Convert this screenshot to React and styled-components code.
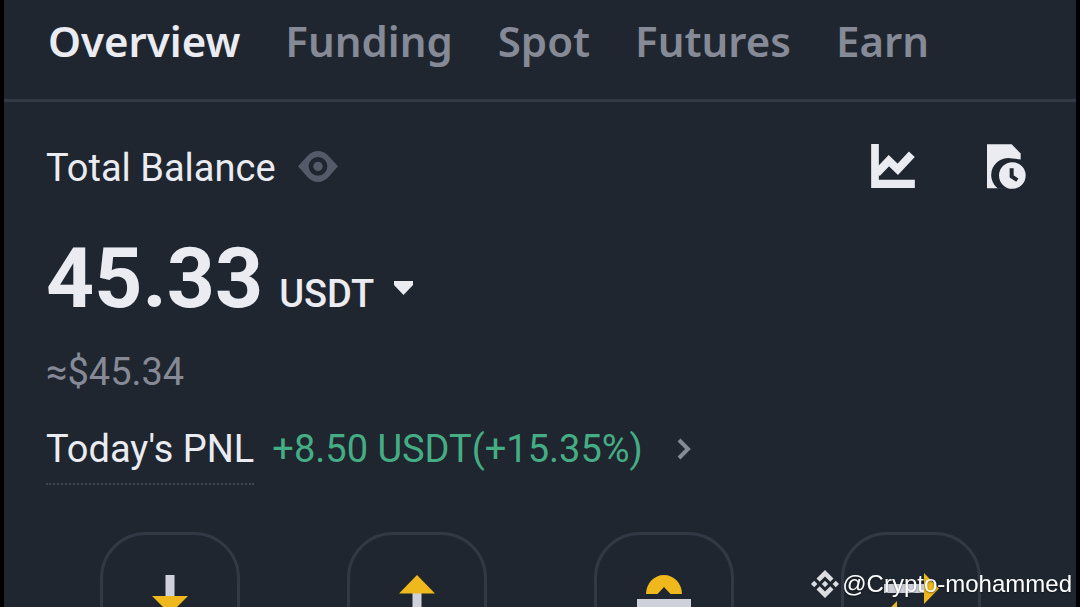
import React, { useState } from 'react'
import styled, { createGlobalStyle } from 'styled-components';

const tabs = ['Overview', 'Funding', 'Spot', 'Futures', 'Earn'];

function DepositIcon() {
    return (
        <ActionSvg viewBox="0 0 54 54" aria-hidden="true">
            <path className="base" d="M22.5 0h9v23h-9zM4 45h46v8H4z" />
            <path className="accent" d="M9 21h36L27 39z" />
        </ActionSvg>
    )
}

function WithdrawIcon() {
    return (
        <ActionSvg viewBox="0 0 54 54" aria-hidden="true">
            <path className="base" d="M22.5 17h9v22h-9zM4 45h46v8H4z" />
            <path className="accent" d="M27 0l18 18.500H9z" />
        </ActionSvg>
    )
}

function EarnIcon() {
    return (
        <ActionSvg viewBox="0 0 54 54" aria-hidden="true">
            <path className="accent" d="M9 19a18 19 0 0 1 36 0H33.500L27 12l-6.500 7z" />
            <path className="base" d="M0 24h54v30H0z" />
        </ActionSvg>
    )
}

function TransferIcon() {
    return (
        <ActionSvg viewBox="0 0 54 54" aria-hidden="true">
            <path className="base" d="M0 9h41v9H0zM14 37h40v9H14z" />
            <path className="accent" d="M40-2l15 15.500L40 29zM13 26v31L-2 41.500z" />
        </ActionSvg>
    )
}

const actions = [
    { name: 'Deposit', Icon: DepositIcon },
    { name: 'Withdraw', Icon: WithdrawIcon },
    { name: 'Earn', Icon: EarnIcon },
    { name: 'Transfer', Icon: TransferIcon },
];

function App() {
    const [tab, setTab] = useState('Overview');

    return (
        <Wallet>
            <GlobalStyle />
            <Tabs>
                {tabs.map((name) => (
                    <Tab key={name} $active={name === tab} onClick={() => setTab(name)}>{name}</Tab>
                ))}
            </Tabs>

            <Panel>
                <BalanceHeader>
                    <BalanceTitle>Total Balance</BalanceTitle>
                    <IconButton aria-label="Hide balance">
                        <svg width="40" height="31" viewBox="55 57 120 93">
                            <path fill="#535b68" fillRule="evenodd" d="M55 103L84 71Q98 57 115 57t31 14L175 103 146 136Q132 150 115 150t-31-14zM115 75a28 28 0 1 0 0 56 28 28 0 1 0 0-56z" />
                            <circle cx="115" cy="103" r="14" fill="#535b68" />
                        </svg>
                    </IconButton>
                    <HeaderTools>
                        <IconButton aria-label="Analysis">
                            <svg width="44" height="44" viewBox="63 53 131 132">
                                <path fill="#eaecf2" d="M63 53h23v107h108v25H63z" />
                                <path fill="none" stroke="#eaecf2" strokeWidth="24" d="M80 141L116 103 143 129 185 84" />
                            </svg>
                        </IconButton>
                        <IconButton aria-label="History">
                            <svg width="39" height="45" viewBox="413 53 117 134">
                                <path fill="#eaecf2" d="M413 53h74l27 28v104H413z" />
                                <path fill="#1f2630" d="M489 96a51 51 0 0 0-42 91h90v-86z" />
                                <circle cx="489" cy="147" r="40" fill="#eaecf2" />
                                <path fill="none" stroke="#1f2630" strokeWidth="12" d="M487 125v25l17 11" />
                            </svg>
                        </IconButton>
                    </HeaderTools>
                </BalanceHeader>

                <BalanceRow>
                    <Amount>45.33</Amount>
                    <CurrencyPicker>
                        <select aria-label="Currency" defaultValue="USDT">
                            <option>USDT</option>
                        </select>
                        <svg width="19" height="14" viewBox="0 0 19 14" aria-hidden="true">
                            <path fill="#eaecf2" d="M0 0h19v4l-9.500 10L0 4z" />
                        </svg>
                    </CurrencyPicker>
                </BalanceRow>

                <Converted>≈$45.34</Converted>

                <PnlRow>
                    <PnlLabel>Today's PNL</PnlLabel>
                    <PnlValue>+8.50 USDT(+15.35%)</PnlValue>
                    <IconButton aria-label="PNL details">
                        <svg width="15" height="22" viewBox="0 0 15 22">
                            <path fill="none" stroke="#858a96" strokeWidth="4" d="M2 2l9 9-9 9" />
                        </svg>
                    </IconButton>
                </PnlRow>

                <Actions>
                    {actions.map(({ name, Icon }) => (
                        <ActionButton key={name} aria-label={name}><Icon /></ActionButton>
                    ))}
                </Actions>
            </Panel>

            <Author>
                <svg width="28" height="28" viewBox="0 0 28 28" aria-hidden="true">
                    <path fill="#dcdde0" d="M14 0l8.500 8.500-3.200 3.200L14 6.400l-5.300 5.300-3.200-3.200zM14 28l-8.500-8.500 3.200-3.200 5.300 5.300 5.300-5.300 3.200 3.200zM3.200 10.800L6.400 14l-3.200 3.200L0 14zM24.800 10.800L28 14l-3.200 3.200-3.200-3.200zM14 10.800l3.200 3.200-3.200 3.200-3.200-3.200z" />
                </svg>
                @Crypto-mohammed
            </Author>
        </Wallet>
    )
}

export default App

const GlobalStyle = createGlobalStyle`
*{
    box-sizing:border-box;
}
body{
    margin:0;
    background-color:#1f2630;
}
button, select{
    font:inherit;
    color:inherit;
    background:none;
    border:0;
    padding:0;
    margin:0;
    cursor:pointer;
}
`

const Wallet = styled.div`
height:100vh;
overflow:hidden;
background-color:#1f2630;
border-left:4px solid #000;
border-right:4px solid #000;
color:#eaecf2;
font-family:Roboto, "Liberation Sans", sans-serif;
font-size:38px;
line-height:48px;
`
const Tabs = styled.nav`
display:flex;
gap:45px;
padding:11px 44px 28px;
border-bottom:3px solid #323944;
`
const Tab = styled.button`
font-family:"Noto Sans", sans-serif;
font-size:42px;
font-weight:600;
line-height:60px;
color:${(props) => props.$active ? '#eaecf2' : '#858a96'};
`
const Panel = styled.main`
padding:36px 42px 0;
`
const BalanceHeader = styled.div`
display:flex;
align-items:flex-start;
gap:22px;
height:60px;
padding-top:6px;
`
const BalanceTitle = styled.h1`
margin:0;
font-size:38px;
font-weight:400;
`
const IconButton = styled.button`
display:flex;
align-items:center;
height:44px;
svg{
    display:block;
}
`
const HeaderTools = styled.div`
display:flex;
align-items:center;
gap:72px;
margin-left:auto;
padding-right:8px;
`
const BalanceRow = styled.div`
display:flex;
align-items:baseline;
gap:16px;
margin-top:33px;
`
const Amount = styled.strong`
font-size:84px;
font-weight:700;
line-height:96px;
`
const CurrencyPicker = styled.label`
display:flex;
align-items:center;
gap:20px;
font-weight:500;
select{
    appearance:none;
}
svg{
    margin-bottom:12px;
}
`
const Converted = styled.div`
margin-top:21px;
color:#858a96;
`
const PnlRow = styled.div`
display:flex;
align-items:flex-start;
gap:18px;
margin-top:29px;
${IconButton}{
    height:48px;
    margin-left:16px;
}
`
const PnlLabel = styled.span`
padding-bottom:10px;
border-bottom:2px dotted #3f4651;
`
const PnlValue = styled.span`
color:#45ad84;
`
const Actions = styled.div`
display:grid;
grid-template-columns:repeat(4, 1fr);
justify-items:center;
margin-top:47px;
`
const ActionButton = styled.button`
display:flex;
align-items:center;
justify-content:center;
width:140px;
height:140px;
border:3px solid #323944;
border-radius:46px;
`
const ActionSvg = styled.svg`
width:54px;
height:54px;
overflow:visible;
.base{
    fill:#cfd1da;
}
.accent{
    fill:#efb81c;
}
`
const Author = styled.div`
position:fixed;
right:8px;
bottom:7px;
display:flex;
align-items:center;
gap:3px;
color:#fff;
font-family:"Liberation Sans", Arial, sans-serif;
font-size:24px;
line-height:32px;
text-shadow:0 1px 2px rgba(0, 0, 0, 0.5);
`
